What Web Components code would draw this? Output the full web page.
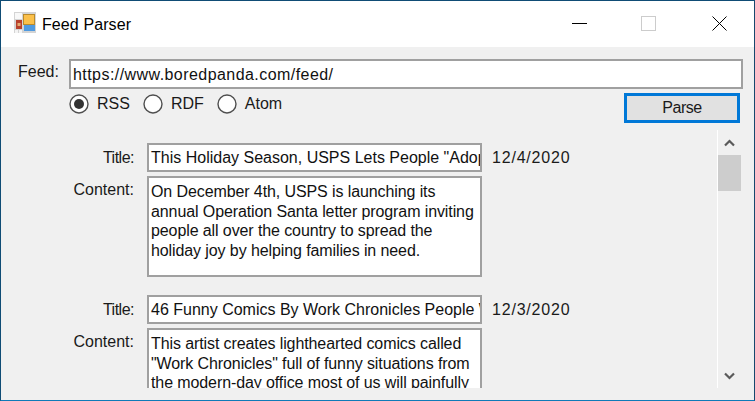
<!DOCTYPE html>
<html>
<head>
<meta charset="utf-8">
<title>Feed Parser</title>
<style>
html, body { margin: 0; padding: 0; background: #f0f0f0; }
body { font-family: "Liberation Sans", Arial, sans-serif; font-size: 16px; color: #1a1a1a; }
</style>
</head>
<body>
<feed-window>
  <title-bar slot="title">Feed Parser</title-bar>
  <feed-form slot="form"></feed-form>
  <feed-list slot="list">
    <feed-item title-text='This Holiday Season, USPS Lets People "Adopt' date="12/4/2020">On December 4th, USPS is launching its
annual Operation Santa letter program inviting
people all over the country to spread the
holiday joy by helping families in need.</feed-item>
    <feed-item title-text="46 Funny Comics By Work Chronicles People W" date="12/3/2020">This artist creates lighthearted comics called
"Work Chronicles" full of funny situations from
the modern-day office most of us will painfully</feed-item>
  </feed-list>
</feed-window>

<script>
class FeedWindow extends HTMLElement {
  constructor() {
    super();
    this.attachShadow({ mode: "open" });
    this.shadowRoot.innerHTML = `
      <style>
        :host {
          display: flex;
          flex-direction: column;
          box-sizing: border-box;
          width: 755px;
          height: 401px;
          overflow: hidden;
          background: #f0f0f0;
          border: 1px solid #0f4c75;
          border-bottom-color: #0f7ab8;
          border-right-color: #17486e;
        }
      </style>
      <slot name="title"></slot>
      <slot name="form"></slot>
      <slot name="list"></slot>
    `;
  }
}

class TitleBar extends HTMLElement {
  constructor() {
    super();
    this.attachShadow({ mode: "open" });
    this.shadowRoot.innerHTML = `
      <style>
        :host {
          display: flex;
          align-items: center;
          height: 46px;
          background: #fff;
          color: #000;
          flex: none;
        }
        .logo { width: 22px; height: 22px; margin: 0 6px 2px 13px; flex: none; }
        .text { flex: 1; font-size: 16px; letter-spacing: 0.1px; padding-top: 2px; }
        .btn {
          box-sizing: border-box;
          width: 71px;
          height: 46px;
          padding-bottom: 1px;
          display: flex;
          align-items: center;
          justify-content: center;
          flex: none;
        }
        .btn.min { width: 67px; }
        .btn.close { margin-right: -1px; }
        .btn svg { display: block; }
      </style>
      <svg class="logo" viewBox="0 0 22 22">
        <rect x="0" y="0" width="22" height="21" fill="#d4d4d4"/>
        <rect x="1" y="1" width="7" height="6" fill="#f8f8f8"/>
        <rect x="2" y="8" width="6" height="9" fill="#b8412c"/>
        <rect x="3.5" y="11" width="3" height="3" fill="#e6ab72"/>
        <rect x="9" y="2" width="12" height="11" fill="#b98a2c"/>
        <rect x="10" y="3" width="10" height="9" fill="#fbc04a"/>
        <rect x="10" y="13" width="11" height="6" fill="#4f9ae0"/>
        <rect x="1" y="18" width="3" height="3" fill="#f4f4f4"/>
        <rect x="5" y="18" width="3" height="3" fill="#f4f4f4"/>
      </svg>
      <span class="text"><slot></slot></span>
      <div class="btn min"><svg width="15" height="15" viewBox="0 0 15 15"><path d="M0 7.5H15" stroke="#000" stroke-width="1"/></svg></div>
      <div class="btn"><svg width="15" height="15" viewBox="0 0 15 15"><rect x="0.5" y="0.5" width="14" height="14" fill="none" stroke="#cccccc"/></svg></div>
      <div class="btn close"><svg width="15" height="15" viewBox="0 0 15 15"><path d="M0.5 0.5L14.5 14.5M14.5 0.5L0.5 14.5" stroke="#000" stroke-width="1"/></svg></div>
    `;
  }
}

class WinTextbox extends HTMLElement {
  constructor() {
    super();
    this.attachShadow({ mode: "open" });
    this.shadowRoot.innerHTML = `
      <style>
        :host {
          display: block;
          box-sizing: border-box;
          height: 29px;
          border: 2px solid #a0a0a0;
          background: #fff;
          color: #111;
          padding: 3px 1px 0 2px;
          overflow: hidden;
          white-space: nowrap;
          line-height: 19px;
        }
        :host([multiline]) {
          height: auto;
          padding-top: 4px;
          line-height: 19.6px;
          letter-spacing: -0.1px;
        }
        :host([multiline]) .body { display: block; white-space: pre-line; }
      </style>
      <span class="body"><slot></slot></span>
    `;
  }
}

class RadioOption extends HTMLElement {
  constructor() {
    super();
    this.attachShadow({ mode: "open" });
    this.shadowRoot.innerHTML = `
      <style>
        :host { display: inline-flex; align-items: center; gap: 8px; line-height: 20px; }
        svg { display: block; flex: none; }
        .dot { display: none; }
        :host([checked]) .dot { display: block; }
      </style>
      <svg width="20" height="20" viewBox="0 0 20 20">
        <circle cx="10" cy="10" r="9" fill="#fff" stroke="#4f4f4f" stroke-width="1.4"/>
        <circle class="dot" cx="10" cy="10" r="5" fill="#333"/>
      </svg>
      <slot></slot>
    `;
  }
}

class FeedForm extends HTMLElement {
  constructor() {
    super();
    this.attachShadow({ mode: "open" });
    this.shadowRoot.innerHTML = `
      <style>
        :host {
          display: grid;
          grid-template-columns: 51px 1fr;
          padding: 12px 11px 0 17px;
          flex: none;
        }
        .label { padding-top: 3px; line-height: 20px; }
        .url { letter-spacing: 0.44px; height: 30px; padding-top: 4px; }
        .options { grid-column: 2; display: flex; align-items: flex-start; margin-top: 3px; }
        .radios { display: flex; gap: 13px; padding-top: 2px; flex: 1; }
        button {
          box-sizing: border-box;
          width: 116px;
          height: 30px;
          margin: 1px 3px 0 0;
          padding: 0 0 1px;
          background: #e1e1e1;
          border: 3px solid #0078d7;
          font: inherit;
          letter-spacing: -0.5px;
          color: #1a1a1a;
        }
      </style>
      <span class="label">Feed:</span>
      <win-textbox class="url">https://www.boredpanda.com/feed/</win-textbox>
      <div class="options">
        <div class="radios">
          <radio-option checked>RSS</radio-option>
          <radio-option>RDF</radio-option>
          <radio-option>Atom</radio-option>
        </div>
        <button>Parse</button>
      </div>
    `;
  }
}

class FeedList extends HTMLElement {
  constructor() {
    super();
    this.attachShadow({ mode: "open" });
    this.shadowRoot.innerHTML = `
      <style>
        :host {
          display: flex;
          height: 258px;
          margin: 7px 13px 0 0;
          flex: none;
        }
        .items {
          flex: 1;
          overflow: hidden;
          display: flex;
          flex-direction: column;
          gap: 18px;
          padding-top: 13px;
          box-sizing: border-box;
        }
        .bar {
          width: 23px;
          flex: none;
          border-left: 1px solid #fff;
          display: flex;
          flex-direction: column;
          justify-content: space-between;
          align-items: center;
        }
        .thumb { width: 23px; height: 36px; background: #cdcdcd; }
        .up { margin-top: 9px; }
        .down { margin-bottom: 8px; }
        .top { display: flex; flex-direction: column; align-items: center; gap: 8px; }
        svg { display: block; }
      </style>
      <div class="items"><slot></slot></div>
      <div class="bar">
        <div class="top">
          <svg class="up" width="11" height="8" viewBox="0 0 11 8"><path d="M1 6.5L5.5 2L10 6.5" fill="none" stroke="#5a5a5a" stroke-width="2.2"/></svg>
          <div class="thumb"></div>
        </div>
        <svg class="down" width="11" height="8" viewBox="0 0 11 8"><path d="M1 1.5L5.5 6L10 1.5" fill="none" stroke="#5a5a5a" stroke-width="2.2"/></svg>
      </div>
    `;
  }
}

class FeedItem extends HTMLElement {
  constructor() {
    super();
    this.attachShadow({ mode: "open" });
    this.shadowRoot.innerHTML = `
      <style>
        :host {
          display: grid;
          grid-template-columns: 146px 335px auto;
          grid-template-rows: 29px 101px;
          row-gap: 4px;
          flex: none;
        }
        .label { text-align: right; padding-right: 13px; padding-top: 4px; line-height: 20px; }
        .title-label { padding-top: 5px; letter-spacing: -0.5px; }
        .date { padding-left: 10px; padding-top: 5px; line-height: 20px; letter-spacing: 0.8px; }
      </style>
      <span class="label title-label">Title:</span>
      <win-textbox class="title"></win-textbox>
      <span class="date"></span>
      <span class="label">Content:</span>
      <win-textbox multiline><slot></slot></win-textbox>
    `;
  }

  connectedCallback() {
    this.shadowRoot.querySelector(".title").textContent = this.getAttribute("title-text");
    this.shadowRoot.querySelector(".date").textContent = this.getAttribute("date");
  }
}

customElements.define("feed-window", FeedWindow);
customElements.define("title-bar", TitleBar);
customElements.define("win-textbox", WinTextbox);
customElements.define("radio-option", RadioOption);
customElements.define("feed-form", FeedForm);
customElements.define("feed-list", FeedList);
customElements.define("feed-item", FeedItem);
</script>
</body>
</html>
